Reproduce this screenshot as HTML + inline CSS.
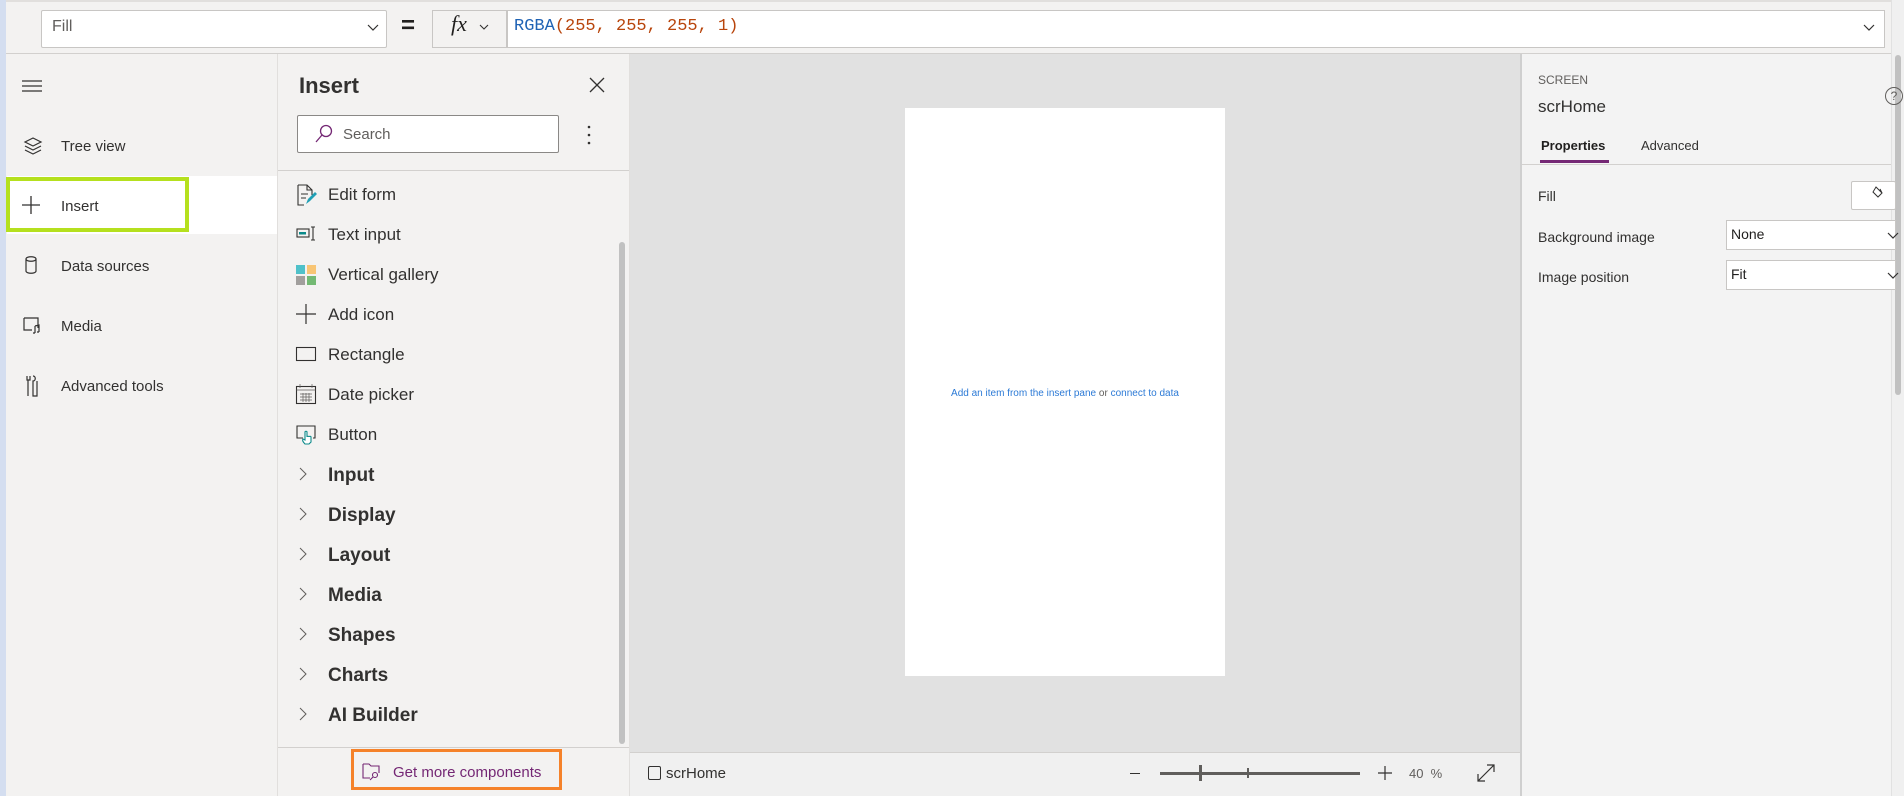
<!DOCTYPE html>
<html><head><meta charset="utf-8"><style>
*{box-sizing:border-box;margin:0;padding:0}
body{width:1904px;height:796px;overflow:hidden;background:#f3f2f1;font-family:"Segoe UI","Liberation Sans",sans-serif;color:#323130;position:relative}
.a{position:absolute}
svg{position:absolute;overflow:visible}
.nav{font-size:15px;left:61px}
.it{left:328px;font-size:17px;color:#323130}
.gr{left:328px;font-size:19px;font-weight:bold;color:#323130}
.chev{left:297px;width:12px;height:14px}
</style></head><body>
<div class="a" style="left:0;top:0;width:6px;height:796px;background:#d4def0"></div>
<div class="a" style="left:6px;top:0;width:1885px;height:54px;background:#f3f2f1;border-top:2px solid #e1dfdd;border-bottom:1px solid #d2d0ce"></div>
<div class="a" style="left:41px;top:10px;width:346px;height:38px;background:#fff;border:1px solid #c8c6c4;border-radius:2px"></div>
<div class="a" style="left:52px;top:18px;font-size:16px;color:#605e5c">Fill</div>
<svg style="left:367px;top:24px" width="12" height="8"><path d="M1 1l5 5 5-5" fill="none" stroke="#323130" stroke-width="1.2"/></svg>
<div class="a" style="left:401px;top:12px;font-size:24px;font-weight:bold;color:#201f1e">=</div>
<div class="a" style="left:432px;top:10px;width:75px;height:38px;background:#f3f2f1;border:1px solid #c8c6c4"></div>
<div class="a" style="left:451px;top:11px;font-size:22px;font-style:italic;font-family:'Liberation Serif',serif;color:#201f1e">fx</div>
<svg style="left:479px;top:24px" width="10" height="7"><path d="M1 1l4 4 4-4" fill="none" stroke="#323130" stroke-width="1.1"/></svg>
<div class="a" style="left:507px;top:10px;width:1378px;height:38px;background:#fff;border:1px solid #c8c6c4"></div>
<div class="a" style="left:514px;top:17px;font-size:17px;font-family:'Liberation Mono',monospace;color:#1e62b4">RGBA<span style="color:#b8450c">(255, 255, 255, 1)</span></div>
<svg style="left:1863px;top:24px" width="12" height="8"><path d="M1 1l5 5 5-5" fill="none" stroke="#323130" stroke-width="1.2"/></svg>
<div class="a" style="left:1891px;top:0;width:13px;height:796px;background:#f0f0f0;border-left:1px solid #e1e1e1"></div>
<div class="a" style="left:1895px;top:55px;width:6px;height:340px;background:#c1c1c1;border-radius:3px"></div>

<div class="a" style="left:6px;top:54px;width:272px;height:742px;background:#f3f2f1;border-right:1px solid #e1dfdd"></div>
<svg style="left:22px;top:80px" width="20" height="12"><path d="M0 1h20M0 6h20M0 11h20" stroke="#323130" stroke-width="1.2"/></svg>
<svg style="left:24px;top:137px" width="18" height="18"><path d="M9 1l8 4-8 4-8-4z M1 9l8 4 8-4 M1 13l8 4 8-4" fill="none" stroke="#323130" stroke-width="1.2"/></svg>
<div class="a nav" style="top:138px">Tree view</div>
<div class="a" style="left:7px;top:176px;width:270px;height:58px;background:#fff"></div>
<div class="a" style="left:7px;top:178px;width:3px;height:52px;background:#742774"></div>
<div class="a" style="left:6px;top:177px;width:183px;height:55px;border:4px solid #b5e01e"></div>
<svg style="left:22px;top:196px" width="18" height="18"><path d="M9 0v18M0 9h18" stroke="#323130" stroke-width="1.3"/></svg>
<div class="a nav" style="top:198px">Insert</div>
<svg style="left:25px;top:256px" width="12" height="18"><path d="M1 3v12c0 3 10 3 10 0V3C11 0 1 0 1 3c0 3 10 3 10 0" fill="none" stroke="#323130" stroke-width="1.2"/></svg>
<div class="a nav" style="top:258px">Data sources</div>
<svg style="left:23px;top:317px" width="20" height="18"><path d="M1 1h14v10M1 1v12h8 M12 9v7 M12 9l4-1v7 M10 16h2 M14 15h2" fill="none" stroke="#323130" stroke-width="1.2"/></svg>
<div class="a nav" style="top:318px">Media</div>
<svg style="left:25px;top:376px" width="14" height="20"><path d="M2 0v4h3V0M3 4v16M8 0c3 0 3 5 0 5v15h4V5" fill="none" stroke="#323130" stroke-width="1.2"/></svg>
<div class="a nav" style="top:378px">Advanced tools</div>

<div class="a" style="left:278px;top:54px;width:352px;height:742px;background:#f3f2f1;border-right:1px solid #e1dfdd"></div>
<div class="a" style="left:299px;top:73px;font-size:22px;font-weight:600;color:#323130">Insert</div>
<svg style="left:590px;top:78px" width="14" height="14"><path d="M0 0l14 14M14 0L0 14" stroke="#323130" stroke-width="1.3"/></svg>
<div class="a" style="left:297px;top:115px;width:262px;height:38px;background:#fff;border:1px solid #8a8886;border-radius:2px"></div>
<svg style="left:315px;top:124px" width="18" height="20"><circle cx="11" cy="7" r="5.5" fill="none" stroke="#742774" stroke-width="1.3"/><path d="M7 11L1 18" stroke="#742774" stroke-width="1.3"/></svg>
<div class="a" style="left:343px;top:126px;font-size:15px;color:#605e5c">Search</div>
<svg style="left:587px;top:125px" width="4" height="20"><circle cx="2" cy="2" r="1.3" fill="#323130"/><circle cx="2" cy="10" r="1.3" fill="#323130"/><circle cx="2" cy="18" r="1.3" fill="#323130"/></svg>
<div class="a" style="left:278px;top:170px;width:351px;height:1px;background:#d2d0ce"></div>
<svg style="left:297px;top:184px" width="20" height="22"><path d="M1 1h9l5 5v5M1 1v20h6M10 1v5h5M4 10h7M4 14h5" fill="none" stroke="#323130" stroke-width="1.1"/><path d="M9 20l2-5 7-7 2 2-7 7z" fill="#21a0b5"/></svg>
<div class="a it" style="top:185px">Edit form</div>
<svg style="left:296px;top:227px" width="22" height="14"><rect x="1" y="2" width="12" height="8" fill="none" stroke="#323130" stroke-width="1.1"/><rect x="3" y="5" width="7" height="2.5" fill="#0b8a8a"/><path d="M15 0h4M17 0v13M15 13h4" stroke="#323130" stroke-width="1.1"/></svg>
<div class="a it" style="top:225px">Text input</div>
<svg style="left:296px;top:265px" width="20" height="20"><rect x="0" y="0" width="9" height="9" fill="#4fc1c9"/><rect x="11" y="0" width="9" height="9" fill="#f8c574"/><rect x="0" y="11" width="9" height="9" fill="#a19f9d"/><rect x="11" y="11" width="9" height="9" fill="#73b973"/></svg>
<div class="a it" style="top:265px">Vertical gallery</div>
<svg style="left:296px;top:304px" width="20" height="20"><path d="M10 0v20M0 10h20" stroke="#323130" stroke-width="1.2"/></svg>
<div class="a it" style="top:305px">Add icon</div>
<svg style="left:296px;top:347px" width="20" height="14"><rect x="0.5" y="0.5" width="19" height="13" fill="none" stroke="#323130" stroke-width="1.1"/></svg>
<div class="a it" style="top:345px">Rectangle</div>
<svg style="left:296px;top:384px" width="20" height="20"><rect x="0.5" y="2.5" width="19" height="17" fill="none" stroke="#323130" stroke-width="1.1"/><path d="M0.5 6h19M4 0v4M16 0v4M4 10h12M4 13h12M4 16h12M7 9v9M10 9v9M13 9v9" stroke="#605e5c" stroke-width="0.7"/></svg>
<div class="a it" style="top:385px">Date picker</div>
<svg style="left:296px;top:425px" width="20" height="20"><path d="M7 13H1V1h18v12h-2" fill="none" stroke="#323130" stroke-width="1.1"/><path d="M9 19c-2-2-3-4-2-5l2 1V7c0-1 2-1 2 0v5c0-1 2-1 2 0 0-1 2-1 2 0v5l-2 2z" fill="#fff" stroke="#0b8a8a" stroke-width="1.1"/></svg>
<div class="a it" style="top:425px">Button</div>
<svg class="chev" style="top:467px"><path d="M3 1l6 6-6 6" fill="none" stroke="#605e5c" stroke-width="1"/></svg>
<div class="a gr" style="top:465px">Input</div>
<svg class="chev" style="top:507px"><path d="M3 1l6 6-6 6" fill="none" stroke="#605e5c" stroke-width="1"/></svg>
<div class="a gr" style="top:505px">Display</div>
<svg class="chev" style="top:547px"><path d="M3 1l6 6-6 6" fill="none" stroke="#605e5c" stroke-width="1"/></svg>
<div class="a gr" style="top:545px">Layout</div>
<svg class="chev" style="top:587px"><path d="M3 1l6 6-6 6" fill="none" stroke="#605e5c" stroke-width="1"/></svg>
<div class="a gr" style="top:585px">Media</div>
<svg class="chev" style="top:627px"><path d="M3 1l6 6-6 6" fill="none" stroke="#605e5c" stroke-width="1"/></svg>
<div class="a gr" style="top:625px">Shapes</div>
<svg class="chev" style="top:667px"><path d="M3 1l6 6-6 6" fill="none" stroke="#605e5c" stroke-width="1"/></svg>
<div class="a gr" style="top:665px">Charts</div>
<svg class="chev" style="top:707px"><path d="M3 1l6 6-6 6" fill="none" stroke="#605e5c" stroke-width="1"/></svg>
<div class="a gr" style="top:705px">AI Builder</div>
<div class="a" style="left:619px;top:242px;width:6px;height:502px;background:#c1c1c1;border-radius:3px"></div>
<div class="a" style="left:278px;top:747px;width:351px;height:1px;background:#d2d0ce"></div>
<div class="a" style="left:351px;top:749px;width:211px;height:41px;border:3px solid #f5822a"></div>
<svg style="left:362px;top:762px" width="18" height="18"><path d="M1 2h6l2 2h8v7M1 2v14h7" fill="none" stroke="#742774" stroke-width="1.1"/><circle cx="13" cy="13" r="2.5" fill="none" stroke="#742774" stroke-width="1.1"/><path d="M11 15l-3 3" stroke="#742774" stroke-width="1.1"/></svg>
<div class="a" style="left:393px;top:764px;font-size:15px;color:#742774">Get more components</div>

<div class="a" style="left:630px;top:54px;width:890px;height:698px;background:#e1e1e1"></div>
<div class="a" style="left:905px;top:108px;width:320px;height:568px;background:#fff"></div>
<div class="a" style="left:905px;top:388px;width:320px;text-align:center;font-size:10px;color:#2c7ad6">Add an item from the insert pane <span style="color:#605e5c">or</span> connect to data</div>
<div class="a" style="left:630px;top:752px;width:890px;height:44px;background:#f0f0f0;border-top:1px solid #d2d0ce"></div>
<div class="a" style="left:648px;top:766px;width:13px;height:14px;border:1.2px solid #323130;border-radius:2px"></div>
<div class="a" style="left:666px;top:765px;font-size:15px;color:#323130">scrHome</div>
<div class="a" style="left:1130px;top:773px;width:10px;height:1.2px;background:#323130"></div>
<div class="a" style="left:1160px;top:772px;width:200px;height:3px;background:#605e5c"></div>
<div class="a" style="left:1199px;top:765px;width:3px;height:16px;background:#605e5c"></div>
<div class="a" style="left:1247px;top:768px;width:1.5px;height:10px;background:#605e5c"></div>
<svg style="left:1378px;top:766px" width="14" height="14"><path d="M7 0v14M0 7h14" stroke="#323130" stroke-width="1.2"/></svg>
<div class="a" style="left:1409px;top:766px;font-size:13px;color:#605e5c">40&nbsp;&nbsp;%</div>
<svg style="left:1477px;top:764px" width="18" height="18"><path d="M1 17L17 1M10 1h7v7M1 10v7h7" fill="none" stroke="#323130" stroke-width="1.2"/></svg>

<div class="a" style="left:1520px;top:54px;width:371px;height:742px;background:#f3f3f3;border-left:2px solid #cfcfcf"></div>
<div class="a" style="left:1538px;top:73px;font-size:12px;color:#605e5c">SCREEN</div>
<div class="a" style="left:1538px;top:97px;font-size:17px;color:#323130">scrHome</div>
<div class="a" style="left:1885px;top:87px;width:18px;height:18px;border:1.2px solid #605e5c;border-radius:50%;font-size:12px;line-height:16px;text-align:center;color:#605e5c">?</div>
<div class="a" style="left:1541px;top:138px;font-size:13px;font-weight:bold;color:#201f1e">Properties</div>
<div class="a" style="left:1641px;top:138px;font-size:13px;color:#323130">Advanced</div>
<div class="a" style="left:1540px;top:160px;width:69px;height:3px;background:#742774"></div>
<div class="a" style="left:1522px;top:164px;width:369px;height:1px;background:#d2d0ce"></div>
<div class="a" style="left:1538px;top:188px;font-size:14px;color:#323130">Fill</div>
<div class="a" style="left:1851px;top:181px;width:45px;height:29px;background:#fff;border:1px solid #c8c6c4;border-radius:2px"></div>
<svg style="left:1872px;top:186px" width="12" height="12"><path d="M4 1l6 6-4 4-5-5z M8 3l2 4" fill="none" stroke="#323130" stroke-width="1"/></svg>
<div class="a" style="left:1538px;top:229px;font-size:14px;color:#323130">Background image</div>
<div class="a" style="left:1726px;top:220px;width:170px;height:30px;background:#fff;border:1px solid #c8c6c4"></div>
<div class="a" style="left:1731px;top:226px;font-size:14px;color:#201f1e">None</div>
<svg style="left:1887px;top:232px" width="12" height="8"><path d="M1 1l5 5 5-5" fill="none" stroke="#323130" stroke-width="1.2"/></svg>
<div class="a" style="left:1538px;top:269px;font-size:14px;color:#323130">Image position</div>
<div class="a" style="left:1726px;top:260px;width:170px;height:30px;background:#fff;border:1px solid #c8c6c4"></div>
<div class="a" style="left:1731px;top:266px;font-size:14px;color:#201f1e">Fit</div>
<svg style="left:1887px;top:272px" width="12" height="8"><path d="M1 1l5 5 5-5" fill="none" stroke="#323130" stroke-width="1.2"/></svg>
</body></html>
